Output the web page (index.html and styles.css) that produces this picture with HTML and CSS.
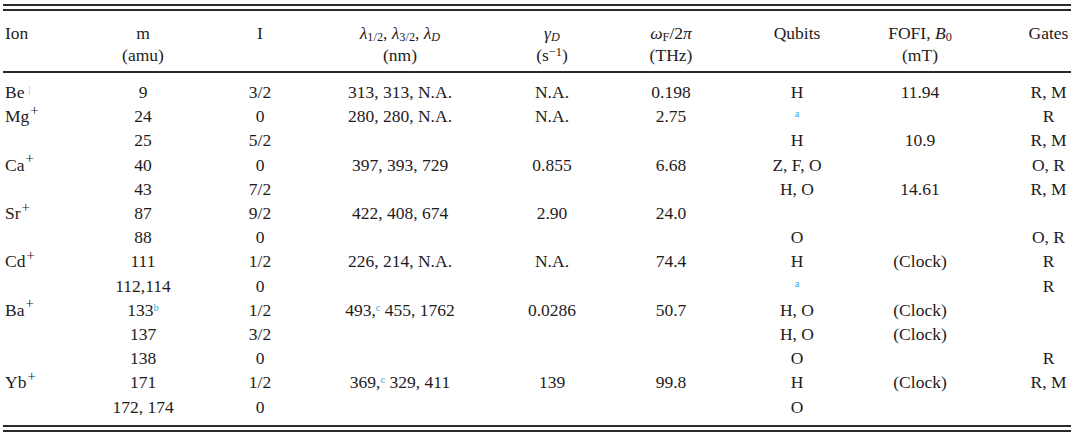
FILE: index.html
```html
<!DOCTYPE html>
<html lang="en">
<head>
  <meta charset="UTF-8">
  <title>Trapped ion species</title>
  <link rel="stylesheet" href="styles.css">
</head>
<body>
  <table class="ions">
    <colgroup>
      <col class="c-ion">
      <col class="c-m">
      <col class="c-spin">
      <col class="c-lambda">
      <col class="c-gamma">
      <col class="c-omega">
      <col class="c-qubit">
      <col class="c-fofi">
      <col class="c-gate">
    </colgroup>
    <thead>
      <tr>
        <th class="ion">Ion</th>
        <th>m<br>(amu)</th>
        <th>I</th>
        <th><i>λ</i><sub>1/2</sub>, <i>λ</i><sub>3/2</sub>, <i>λ</i><sub><i>D</i></sub><br>(nm)</th>
        <th><i>γ</i><sub><i>D</i></sub><br>(s<sup>−1</sup>)</th>
        <th><i>ω</i><sub>F</sub>/2<i>π</i><br>(THz)</th>
        <th>Qubits</th>
        <th>FOFI, <i>B</i><sub>0</sub><br>(mT)</th>
        <th class="gate">Gates</th>
      </tr>
    </thead>
    <tbody>
      <tr>
        <td class="ion">Be<sup class="mark">|</sup></td>
        <td>9</td><td>3/2</td><td>313, 313, N.A.</td><td>N.A.</td><td>0.198</td>
        <td>H</td><td>11.94</td><td class="gate">R, M</td>
      </tr>
      <tr>
        <td class="ion">Mg<sup class="ch">+</sup></td>
        <td>24</td><td>0</td><td>280, 280, N.A.</td><td>N.A.</td><td>2.75</td>
        <td><sup class="note">a</sup></td><td></td><td class="gate">R</td>
      </tr>
      <tr>
        <td class="ion"></td>
        <td>25</td><td>5/2</td><td></td><td></td><td></td>
        <td>H</td><td>10.9</td><td class="gate">R, M</td>
      </tr>
      <tr>
        <td class="ion">Ca<sup class="ch">+</sup></td>
        <td>40</td><td>0</td><td>397, 393, 729</td><td>0.855</td><td>6.68</td>
        <td>Z, F, O</td><td></td><td class="gate">O, R</td>
      </tr>
      <tr>
        <td class="ion"></td>
        <td>43</td><td>7/2</td><td></td><td></td><td></td>
        <td>H, O</td><td>14.61</td><td class="gate">R, M</td>
      </tr>
      <tr>
        <td class="ion">Sr<sup class="ch">+</sup></td>
        <td>87</td><td>9/2</td><td>422, 408, 674</td><td>2.90</td><td>24.0</td>
        <td></td><td></td><td class="gate"></td>
      </tr>
      <tr>
        <td class="ion"></td>
        <td>88</td><td>0</td><td></td><td></td><td></td>
        <td>O</td><td></td><td class="gate">O, R</td>
      </tr>
      <tr>
        <td class="ion">Cd<sup class="ch">+</sup></td>
        <td>111</td><td>1/2</td><td>226, 214, N.A.</td><td>N.A.</td><td>74.4</td>
        <td>H</td><td>(Clock)</td><td class="gate">R</td>
      </tr>
      <tr>
        <td class="ion"></td>
        <td>112,114</td><td>0</td><td></td><td></td><td></td>
        <td><sup class="note">a</sup></td><td></td><td class="gate">R</td>
      </tr>
      <tr>
        <td class="ion">Ba<sup class="ch">+</sup></td>
        <td>133<sup class="note">b</sup></td><td>1/2</td><td>493,<sup class="note">c</sup> 455, 1762</td><td>0.0286</td><td>50.7</td>
        <td>H, O</td><td>(Clock)</td><td class="gate"></td>
      </tr>
      <tr>
        <td class="ion"></td>
        <td>137</td><td>3/2</td><td></td><td></td><td></td>
        <td>H, O</td><td>(Clock)</td><td class="gate"></td>
      </tr>
      <tr>
        <td class="ion"></td>
        <td>138</td><td>0</td><td></td><td></td><td></td>
        <td>O</td><td></td><td class="gate">R</td>
      </tr>
      <tr>
        <td class="ion">Yb<sup class="ch">+</sup></td>
        <td>171</td><td>1/2</td><td>369,<sup class="note">c</sup> 329, 411</td><td>139</td><td>99.8</td>
        <td>H</td><td>(Clock)</td><td class="gate">R, M</td>
      </tr>
      <tr>
        <td class="ion"></td>
        <td>172, 174</td><td>0</td><td></td><td></td><td></td>
        <td>O</td><td></td><td class="gate"></td>
      </tr>
    </tbody>
  </table>
</body>
</html>
```

FILE: styles.css
```css
body {
  margin: 0;
  padding: 4px 0 0 3px;
  background: #fff;
  color: #1f1b1c;
  font-family: 'Liberation Serif', 'Times New Roman', serif;
  font-size: 17.5px;
}

.ions {
  width: 1068px;
  table-layout: fixed;
  border-collapse: collapse;
  border-top: 7px double #2a2a2a;
  border-bottom: 7px double #2a2a2a;
}

.c-ion    { width: 77px; }
.c-m      { width: 126px; }
.c-spin   { width: 108px; }
.c-lambda { width: 172px; }
.c-gamma  { width: 132px; }
.c-omega  { width: 106px; }
.c-qubit  { width: 146px; }
.c-fofi   { width: 100px; }
.c-gate   { width: 101px; }

th,
td {
  padding: 0;
  text-align: center;
  white-space: nowrap;
  font-weight: normal;
}

th {
  line-height: 22px;
  vertical-align: top;
  padding-top: 11px;
  padding-bottom: 5px;
  border-bottom: 2px solid #2a2a2a;
}

td {
  height: 24.2px;
  line-height: 24.2px;
}

tbody tr:first-child td {
  padding-top: 7px;
}

tbody tr:last-child td {
  padding-bottom: 6px;
}

.ion {
  text-align: left;
  padding-left: 2px;
}

.gate {
  padding-left: 56px;
}

sub,
sup {
  line-height: 0;
  font-size: 0.7em;
}

sub {
  vertical-align: -0.18em;
}

sup {
  vertical-align: 0.5em;
}

th sup {
  vertical-align: 0.38em;
}

.ch {
  font-size: 0.85em;
  margin-left: 1px;
}

.note {
  color: #3aa7dc;
  font-size: 0.6em;
}

.mark {
  color: #e08aa6;
  font-size: 0.6em;
  margin-left: 4px;
}
```
